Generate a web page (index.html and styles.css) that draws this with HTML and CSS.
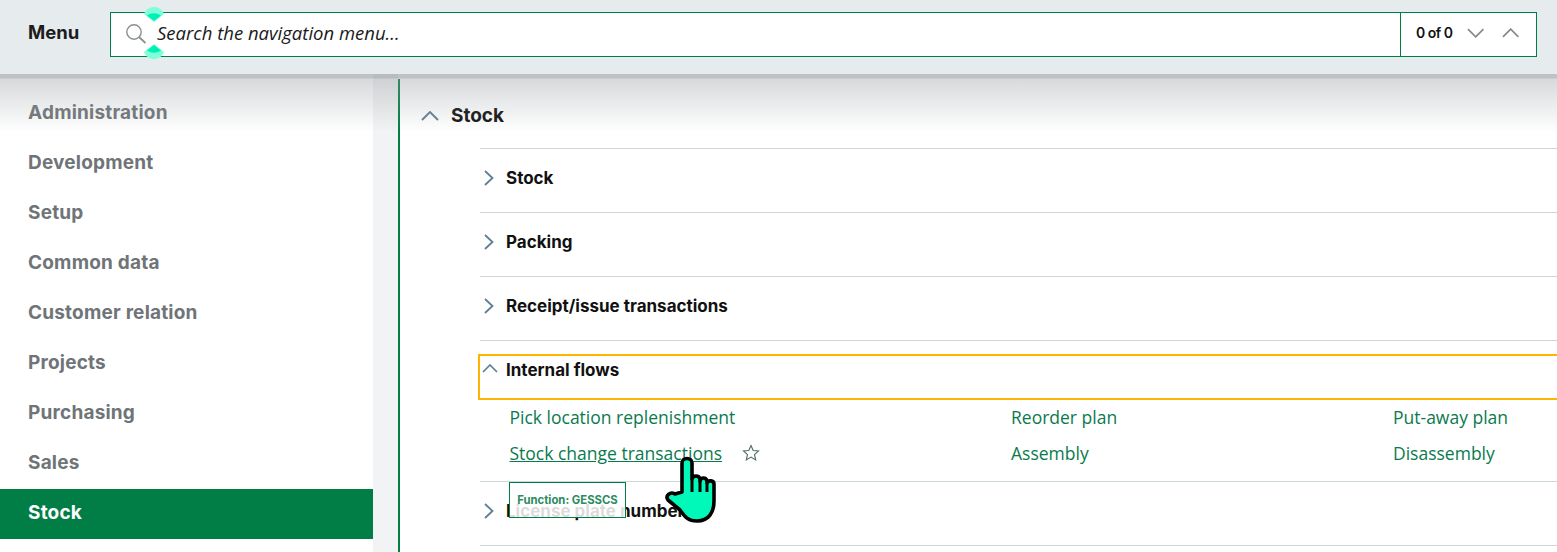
FILE: index.html
```html
<!DOCTYPE html>
<html lang="en">
<head>
<meta charset="utf-8">
<title>Menu</title>
<link rel="stylesheet" href="styles.css">
</head>
<body>
<header class="top">
  <div class="menu-title">Menu</div>
  <div class="search">
    <svg class="search-icon" width="22" height="22" viewBox="0 0 22 22"><circle cx="9" cy="9" r="7.2" fill="none" stroke="#8a8f93" stroke-width="1.4"/><path d="M14 14l6.5 6" stroke="#8a8f93" stroke-width="1.8" fill="none"/></svg>
    <div class="search-text">Search the navigation menu...</div>
    <div class="counter">
      <span class="count">0 of 0</span>
      <svg class="chev" width="18" height="10" viewBox="0 0 18 10"><path d="M1 1l8 8 8-8" fill="none" stroke="#8a8a8a" stroke-width="1.8"/></svg>
      <svg class="chev" width="18" height="10" viewBox="0 0 18 10"><path d="M1 9l8-8 8 8" fill="none" stroke="#8a8a8a" stroke-width="1.8"/></svg>
    </div>
    <svg class="handle handle-top" width="20" height="15" viewBox="0 0 20 15"><path d="M0 7C2 2 6 0 10 0s8 2 10 7l-10 8z" fill="#7dffd9"/><path d="M3 8.500Q10 4 17 8.500L10 14z" fill="#00f0b4"/></svg>
    <svg class="handle handle-bottom" width="20" height="15" viewBox="0 0 20 15"><path d="M0 8C2 13 6 15 10 15s8-2 10-7L10 0z" fill="#7dffd9"/><path d="M3 6.500Q10 11 17 6.500L10 1z" fill="#00f0b4"/></svg>
  </div>
</header>
<div class="body">
  <nav class="side">
    <a class="side-item">Administration</a>
    <a class="side-item">Development</a>
    <a class="side-item">Setup</a>
    <a class="side-item">Common data</a>
    <a class="side-item">Customer relation</a>
    <a class="side-item">Projects</a>
    <a class="side-item">Purchasing</a>
    <a class="side-item">Sales</a>
    <a class="side-item active">Stock</a>
  </nav>
  <div class="gutter"></div>
  <main class="main">
    <div class="section-head">
      <svg width="18" height="10" viewBox="0 0 18 10"><path d="M1 9l8-8 8 8" fill="none" stroke="#5f7f95" stroke-width="1.9"/></svg>
      <h1>Stock</h1>
    </div>
    <div class="groups">
      <div class="group"><svg class="ci" width="10" height="16" viewBox="0 0 10 16"><path d="M1 1l7.500 7L1 15" fill="none" stroke="#5f7f95" stroke-width="1.800"/></svg><h2>Stock</h2></div>
      <div class="group"><svg class="ci" width="10" height="16" viewBox="0 0 10 16"><path d="M1 1l7.500 7L1 15" fill="none" stroke="#5f7f95" stroke-width="1.800"/></svg><h2>Packing</h2></div>
      <div class="group"><svg class="ci" width="10" height="16" viewBox="0 0 10 16"><path d="M1 1l7.500 7L1 15" fill="none" stroke="#5f7f95" stroke-width="1.800"/></svg><h2>Receipt/issue transactions</h2></div>
      <div class="open-group">
        <div class="group focus"><svg class="co" width="16" height="9" viewBox="0 0 16 9"><path d="M1 8l7-7 7 7" fill="none" stroke="#5f7f95" stroke-width="1.700"/></svg><h2>Internal flows</h2></div>
        <div class="links">
          <a class="link">Pick location replenishment</a>
          <a class="link">Reorder plan</a>
          <a class="link">Put-away plan</a>
          <div class="link-cell">
            <a class="link hovered">Stock change transactions</a>
            <svg class="star" width="18" height="18" viewBox="0 0 18 18"><path d="M9 1.500l2.200 5 5.300.5-4 3.600 1.200 5.300L9 13.100l-4.700 2.800 1.200-5.300-4-3.600 5.300-.5z" fill="none" stroke="#4d6b5e" stroke-width="1.100"/></svg>
            <div class="tooltip">Function: GESSCS</div>
          </div>
          <a class="link">Assembly</a>
          <a class="link">Disassembly</a>
        </div>
      </div>
      <div class="group"><svg class="ci" width="10" height="16" viewBox="0 0 10 16"><path d="M1 1l7.500 7L1 15" fill="none" stroke="#5f7f95" stroke-width="1.800"/></svg><h2>License plate numbers</h2></div>
    </div>
  </main>
</div>
<svg class="hand" width="54" height="70" viewBox="0 0 54 70"><path d="M18 36V7c0-6 10-6 10 0v16c1-4 7-4 8 0v2c1-4 6-4 7 0v2c1-3 7-3 7 1v17c0 11-5 20-17 20-9 0-12-4-17-11L4 44c-3-4 2-9 7-6z" fill="#00f9b9" stroke="#000" stroke-width="3.600" stroke-linejoin="round"/><path d="M28 23v13M36 25v11M43 27v9" stroke="#000" stroke-width="3" fill="none"/></svg>
</body>
</html>
```
FILE: styles.css
```css
* { box-sizing: border-box; }
html, body { margin: 0; padding: 0; height: 552px; overflow: hidden; }
body { position: relative; background: #fff; font-family: "Inter", "Roboto", "Liberation Sans", sans-serif; color: #111; }

.top {
  position: relative; z-index: 2;
  height: 74px; background: #e6ebee;
  display: flex; align-items: flex-start;
  padding: 12px 20px 0 28px;
}
.menu-title { width: 82px; font-size: 18.5px; font-weight: 700; line-height: 41px; color: #1c1c1c; }
.search {
  position: relative; flex: 1; height: 45px;
  background: #fff; border: 1px solid #007e45;
  display: flex; align-items: center;
}
.search-icon { margin-left: 14px; margin-bottom: 2px; }
.search-text {
  flex: 1; margin-left: 10px; margin-bottom: 4px;
  font: italic 400 18.5px "Open Sans", sans-serif; color: #1a1a1a;
}
.counter {
  width: 136px; height: 100%;
  border-left: 1px solid #007e45;
  display: flex; align-items: center; padding: 0 0 4px 15px;
}
.count { font-size: 14px; font-weight: 600; width: 53px; letter-spacing: -.5px; }
.chev { margin-right: 17px; }
.handle { position: absolute; left: 33px; }
.handle-top { top: -6px; }
.handle-bottom { top: 31px; }

.body { position: relative; display: flex; height: 478px; }
.body::before {
  content: ""; position: absolute; left: 0; right: 0; top: 0; height: 58px; z-index: 1; pointer-events: none;
  background:
    linear-gradient(to bottom, rgba(120,128,133,.48) 0, rgba(120,128,133,.48) 4px, rgba(150,155,158,.38) 5px, rgba(255,255,255,0) 100%);
}
.side { width: 373px; background: #fff; padding-top: 13px; flex: none; }
.side-item {
  display: flex; align-items: center; height: 50px; padding-left: 28px;
  font-size: 19px; font-weight: 700; letter-spacing: .2px; color: #6f7478;
}
.side-item.active { margin-top: 2px; padding-bottom: 4px; background: #007e45; color: #fff; }
.gutter { width: 25px; background: #f2f3f5; flex: none; }
.main { flex: 1; border-left: 2px solid #007e45; margin-top: 5px; min-width: 0; }
.section-head { display: flex; align-items: center; height: 69px; padding: 4px 0 0 21px; }
.section-head h1 { margin: 0 0 0 12px; font-size: 19px; font-weight: 700; color: #111; }
.groups { margin-left: 80px; border-top: 1px solid #ccd6db; }
.group { display: flex; align-items: center; height: 64px; border-bottom: 1px solid #ccd6db; padding: 0 0 6px 4px; }
.group h2 { margin: 0 0 0 12px; font-size: 17px; font-weight: 700; color: #111; }
.open-group { border-bottom: 1px solid #ccd6db; height: 141px; padding-top: 13px; }
.group.focus { height: 46px; margin-left: -2px; border: 2px solid #ffb500; border-right: 0; padding: 0 0 15px 2px; position: relative; }
.group.focus h2 { margin-left: 8px; }
.ci { flex: none; }
.co { flex: none; margin-bottom: 3px; }

.links { display: grid; grid-template-columns: 501.5px 382px 1fr; grid-auto-rows: 36px; padding: 0 0 0 29.5px; margin-top: -1px; }
.link { font: 400 17.5px/36px "Open Sans", sans-serif; color: #0a7a4e; }
.link-cell { position: relative; display: flex; align-items: center; }
.hovered { text-decoration: underline; line-height: 36px; }
.star { margin-left: 20px; }
.tooltip {
  position: absolute; left: -0.5px; top: 47px; z-index: 3;
  width: 117px; height: 36px;
  background: rgba(255,255,255,.85); border: 1px solid #007e45;
  font-size: 11.3px; font-weight: 700; color: #2b8c5f;
  display: flex; align-items: center; justify-content: center;
}
.hand { position: absolute; left: 664px; top: 456px; z-index: 4; }
```
